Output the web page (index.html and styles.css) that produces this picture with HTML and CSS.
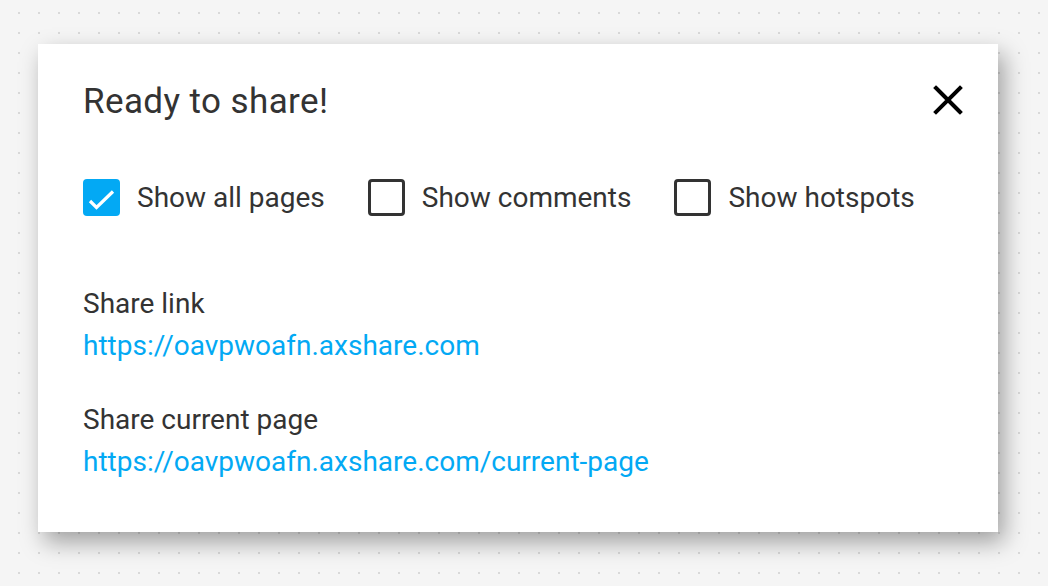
FILE: index.html
```html
<!DOCTYPE html>
<html lang="en">

<head>
    <meta charset="UTF-8" />
    <title>Ready to share</title>
    <link rel="stylesheet" href="styles.css">
</head>

<body>

    <div class="share-dialog">
        <div class="dialog-header">
            <h1>Ready to share!</h1>
            <button class="close-btn" aria-label="Close">
                <svg width="30" height="30" viewBox="0 0 30 30">
                    <path d="M3 3 L27 27 M27 3 L3 27" stroke="#000" stroke-width="4" stroke-linecap="square" fill="none" />
                </svg>
            </button>
        </div>

        <!-- Options -->
        <div class="options">
            <label class="option">
                <span class="box checked">
                    <svg width="37" height="37" viewBox="0 0 37 37">
                        <path d="M7 22 L13.5 28.5 L30 12.5" stroke="#fff" stroke-width="3.2" fill="none" />
                    </svg>
                </span>
                Show all pages
            </label>
            <label class="option">
                <span class="box"></span>
                Show comments
            </label>
            <label class="option">
                <span class="box"></span>
                Show hotspots
            </label>
        </div>

        <!-- Links -->
        <div class="share-item">
            <div class="share-label">Share link</div>
            <a class="share-url" href="#">https://oavpwoafn.axshare.com</a>
        </div>
        <div class="share-item">
            <div class="share-label">Share current page</div>
            <a class="share-url" href="#">https://oavpwoafn.axshare.com/current-page</a>
        </div>
    </div>

</body>

</html>
```

FILE: styles.css
```css
body {
    margin: 0;
    height: 586px;
    font-family: Roboto, "Liberation Sans", sans-serif;
    color: #333;
    background-color: #f5f5f5;
    background-image: radial-gradient(circle, #d9d9d9 1px, transparent 1.5px);
    background-size: 20px 20px;
    background-position: 9px 3px;
    overflow: hidden;
}

.share-dialog {
    box-sizing: border-box;
    width: 960px;
    height: 488px;
    margin: 44px 0 0 38px;
    padding: 35px 35px 0 45px;
    background: #fff;
    box-shadow: 6px 10px 22px rgba(0, 0, 0, 0.35);
}

/* Header */
.dialog-header {
    display: flex;
    justify-content: space-between;
    align-items: center;
    height: 46px;
}

.dialog-header h1 {
    margin: 0;
    font-size: 35px;
    font-weight: 400;
    letter-spacing: 0.4px;
    line-height: 46px;
}

.close-btn {
    border: none;
    background: none;
    padding: 0;
    width: 30px;
    height: 30px;
    margin-top: -4px;
    cursor: pointer;
}

.close-btn svg {
    display: block;
}

/* Checkboxes */
.options {
    display: flex;
    gap: 43px;
    margin-top: 54px;
    margin-bottom: 67px;
}

.option {
    display: flex;
    align-items: center;
    gap: 17px;
    font-size: 28px;
    line-height: 37px;
}

.box {
    box-sizing: border-box;
    width: 37px;
    height: 37px;
    border: 3.5px solid #333;
    border-radius: 4px;
}

.box.checked {
    border: none;
    background: #03a9f4;
}

.box svg {
    display: block;
}

/* Share links */
.share-item {
    display: flex;
    flex-direction: column;
    font-size: 28px;
    line-height: 42px;
    margin-bottom: 32px;
}

.share-url {
    color: #03a9f4;
    text-decoration: none;
}
```
